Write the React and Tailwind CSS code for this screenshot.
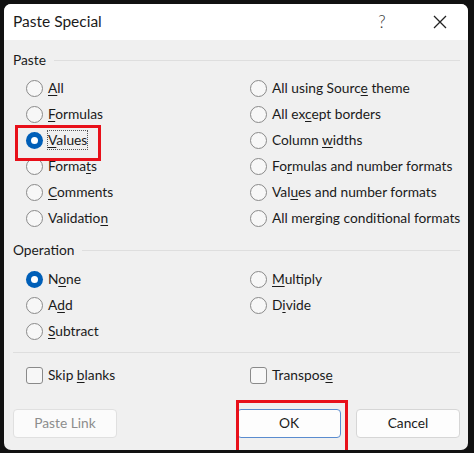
import { useState } from 'react'

const font = { fontFamily: 'Lato, "Noto Sans", sans-serif' }

// label with one underlined access key, -1 for none
function Key({ text, k }) {
  if (k < 0) return <span>{text}</span>
  return (
    <span>
      {text.slice(0, k)}
      <u className="underline-offset-2">{text[k]}</u>
      {text.slice(k + 1)}
    </span>
  )
}

function Radio({ text, k, checked, focus }) {
  return (
    <div className="h-[26px] flex items-center gap-[5px] whitespace-nowrap">
      {checked ? (
        <span className="w-[17px] h-[17px] rounded-full bg-[#005fb8] flex items-center justify-center shrink-0">
          <span className="w-[7px] h-[7px] rounded-full bg-white" />
        </span>
      ) : (
        <span className="w-[17px] h-[17px] rounded-full border border-[#8a8a8a] bg-[#f7f7f7] shrink-0" />
      )}
      <span className={focus ? 'outline outline-1 outline-dotted outline-[#555] leading-[18px]' : 'leading-[18px]'}>
        <Key text={text} k={k} />
      </span>
    </div>
  )
}

function Check({ text, k }) {
  return (
    <div className="h-[26px] flex items-center gap-[5px] whitespace-nowrap">
      <span className="w-[17px] h-[17px] rounded-[3px] border border-[#8a8a8a] bg-[#f7f7f7] shrink-0" />
      <Key text={text} k={k} />
    </div>
  )
}

function Group({ title }) {
  return (
    <div className="h-[20px] flex items-center gap-[8px]">
      <span>{title}</span>
      <span className="flex-1 h-px bg-[#dedede]" />
    </div>
  )
}

const paste = [
  ['All', 0, 'All using Source theme', 15],
  ['Formulas', 0, 'All except borders', 6],
  ['Values', 0, 'Column widths', 7],
  ['Formats', 5, 'Formulas and number formats', 2],
  ['Comments', 0, 'Values and number formats', 3],
  ['Validation', 9, 'All merging conditional formats', -1],
]

export default function App() {
  const [sel] = useState('Values')
  return (
    <div className="w-[474px] h-[453px] bg-[#111] pt-[4px] pl-[4px] pr-[6px] pb-[3px] text-[13.75px] text-[#1b1b1b]" style={font}>
      <div className="h-full bg-[#f0f0f0] rounded-[7px] overflow-hidden flex flex-col relative">
        <div className="h-[36px] bg-white flex items-center pl-[9px] shrink-0">
          <span className="text-[15.5px] flex-1">Paste Special</span>
          <span className="w-[20px] text-center text-[17px] text-[#333] mr-[40px] font-light">?</span>
          <svg width="16" height="16" viewBox="0 0 16 16" className="mr-[20px]">
            <path d="M2 2L14 14M14 2L2 14" stroke="#222" strokeWidth="1.3" />
          </svg>
        </div>

        <div className="pl-[9px] pr-[8px] flex flex-col">
          <div className="mt-[10px]"><Group title="Paste" /></div>
          <div className="mt-[5px] pl-[13px] grid grid-cols-[224px_1fr]">
            {paste.map(([a, ka, b, kb]) => (
              <div key={a} className="contents">
                <Radio text={a} k={ka} checked={a === sel} focus={a === sel} />
                <Radio text={b} k={kb} />
              </div>
            ))}
          </div>

          <div className="mt-[9px]"><Group title="Operation" /></div>
          <div className="mt-[6px] pl-[13px] grid grid-cols-[224px_1fr]">
            <Radio text="None" k={1} checked />
            <Radio text="Multiply" k={0} />
            <Radio text="Add" k={1} />
            <Radio text="Divide" k={1} />
            <Radio text="Subtract" k={0} />
          </div>

          <div className="mt-[8px] h-px bg-[#dedede]" />

          <div className="mt-[9px] pl-[13px] grid grid-cols-[224px_1fr]">
            <Check text="Skip blanks" k={5} />
            <Check text="Transpose" k={8} />
          </div>

          <div className="mt-[21px] flex">
            <button className="w-[104px] h-[29px] rounded-[4px] border border-[#e0e0e0] bg-[#fbfbfb] text-[#8d8d8d]">Paste Link</button>
            <div className="flex-1" />
            <button className="w-[104px] h-[29px] rounded-[4px] border border-[#5a8ccf] bg-[#fdfdfd]">OK</button>
            <button className="ml-[15px] w-[104px] h-[29px] rounded-[4px] border border-[#d6d6d6] bg-[#fdfdfd]">Cancel</button>
          </div>
        </div>

        {/* red highlight boxes drawn over the dialog */}
        <div className="absolute left-[11px] top-[121px] w-[86px] h-[36px] border-[3px] border-[#e8101a]" />
        <div className="absolute left-[232px] top-[396px] w-[112px] h-[60px] border-[3px] border-[#e8101a]" />
      </div>
    </div>
  )
}
